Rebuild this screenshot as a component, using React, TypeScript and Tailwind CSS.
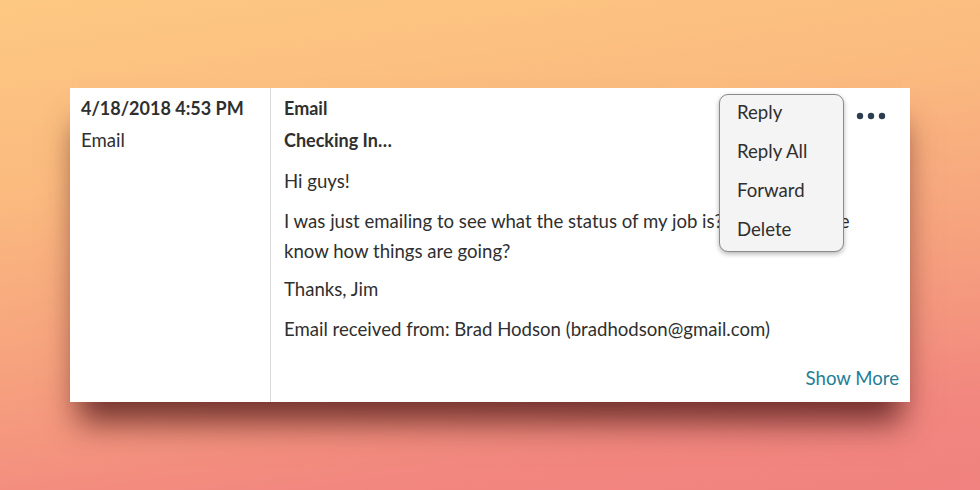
const MENU = ["Reply", "Reply All", "Forward", "Delete"];

export default function App() {
  return (
    <div className="h-[490px] w-[980px] overflow-hidden bg-[linear-gradient(172deg,#fdc882_0%,#fbbb7f_30%,#f6a17e_60%,#f2877f_85%,#f1827f_100%)] pt-[88px] pl-[70px] font-['Lato','Open_Sans',sans-serif] text-[#2f2f2f]">
      <div className="relative flex h-[314px] w-[840px] bg-white shadow-[0_28px_30px_-8px_rgba(80,25,25,0.8)]">
        <div className="w-[201px] shrink-0 border-r border-[#d9d9d9] pl-[11px] pt-[8px]">
          <div className="text-[18px] font-bold leading-[24px]">4/18/2018 4:53 PM</div>
          <div className="mt-[8px] text-[18.6px] leading-[24px]">Email</div>
        </div>
        <div className="relative flex flex-1 flex-col pl-[13px] pr-[11px] pt-[8px] text-[18.6px] leading-[24px]">
          <div className="text-[18px] font-bold">Email</div>
          <div className="mt-[8px] text-[18px] font-bold">Checking In…</div>
          <div className="mt-[17px]">Hi guys!</div>
          <div className="mt-[13px] pr-[40px] leading-[30px]">
            I was just emailing to see what the status of my job is? Can you let me know how things are going?
          </div>
          <div className="mt-[11px]">Thanks, Jim</div>
          <div className="mt-[16px]">Email received from: Brad Hodson (bradhodson@gmail.com)</div>
          <div className="mt-[25px] text-right text-[#1f7e96]">Show More</div>

          <button className="absolute right-[24px] top-[24px] text-[#2d3e50]">
            <svg width="30" height="8" viewBox="0 0 30 8" fill="currentColor">
              <circle cx="4" cy="4" r="3.2" />
              <circle cx="15" cy="4" r="3.2" />
              <circle cx="26" cy="4" r="3.2" />
            </svg>
          </button>
          <div className="absolute left-[448px] top-[6px] flex h-[158px] w-[125px] flex-col gap-[15px] rounded-[9px] border border-[#8a8a8a] bg-[#f4f4f4] pl-[17px] pt-[5px] shadow-[0_2px_5px_rgba(0,0,0,0.3)]">
            {MENU.map((m) => (
              <div key={m} className="text-[18.6px] leading-[24px]">{m}</div>
            ))}
          </div>
        </div>
      </div>
    </div>
  );
}
